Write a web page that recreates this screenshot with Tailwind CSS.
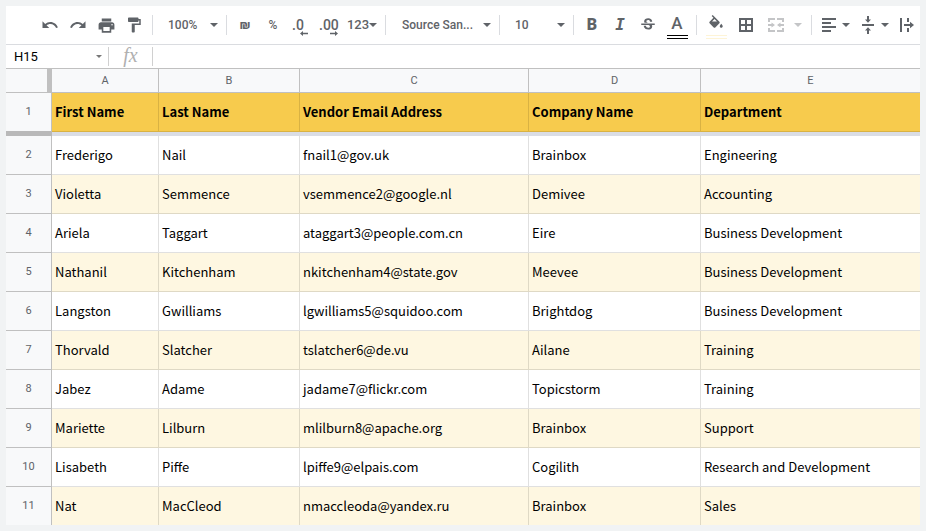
<!DOCTYPE html>
<html lang="en">
<head>
    <meta charset="UTF-8">
    <title>Vendors</title>
    <meta name="viewport" content="width=device-width, initial-scale=1.0">
    <script src="https://cdn.jsdelivr.net/npm/@tailwindcss/browser@4"></script>
</head>
<body class="bg-[#f1f3f4] p-1.5 font-['Roboto',sans-serif]">
    <div class="bg-white overflow-hidden">

        <!-- Toolbar -->
        <div class="flex items-center h-[39px] pl-[26px] border-b border-[#dadce0] text-[#5f6368] text-xs font-medium overflow-hidden *:shrink-0">
            <div class="flex px-1">
                <button class="w-7 h-7 grid place-items-center" aria-label="Undo">
                    <svg class="size-[18px]" viewBox="0 0 24 24" fill="currentColor"><path d="M12.5 8c-2.65 0-5.05.99-6.9 2.6L2 7v9h9l-3.62-3.62c1.39-1.16 3.16-1.88 5.12-1.88 3.54 0 6.55 2.31 7.6 5.5l2.37-.78C21.08 11.03 17.15 8 12.5 8z"/></svg>
                </button>
                <button class="w-7 h-7 grid place-items-center" aria-label="Redo">
                    <svg class="size-[18px]" viewBox="0 0 24 24" fill="currentColor"><path d="M18.4 10.6C16.55 8.99 14.15 8 11.5 8c-4.65 0-8.58 3.03-9.96 7.22L3.9 16c1.05-3.19 4.05-5.5 7.6-5.5 1.95 0 3.73.72 5.12 1.88L13 16h9V7l-3.6 3.6z"/></svg>
                </button>
                <button class="w-7 h-7 grid place-items-center" aria-label="Print">
                    <svg class="size-[19px]" viewBox="0 0 24 24" fill="currentColor"><path d="M19 8H5c-1.66 0-3 1.34-3 3v6h4v4h12v-4h4v-6c0-1.66-1.34-3-3-3zm-3 11H8v-5h8v5zm3-7c-.55 0-1-.45-1-1s.45-1 1-1 1 .45 1 1-.45 1-1 1zm-1-9H6v4h12V3z"/></svg>
                </button>
                <button class="w-7 h-7 grid place-items-center" aria-label="Paint format">
                    <svg class="size-[18px]" viewBox="0 0 24 24" fill="currentColor"><path d="M18 4V3c0-.55-.45-1-1-1H5c-.55 0-1 .45-1 1v4c0 .55.45 1 1 1h12c.55 0 1-.45 1-1V6h1v4H9v11c0 .55.45 1 1 1h2c.55 0 1-.45 1-1v-9h8V4h-3z"/></svg>
                </button>
            </div>

            <div class="w-px h-5 bg-[#dadce0]"></div>
            <div class="grid items-center w-[73px]">
                <select class="appearance-none col-start-1 row-start-1 w-full h-7 pl-[15px] outline-none" aria-label="Zoom">
                    <option>100%</option>
                </select>
                <svg class="col-start-1 row-start-1 justify-self-end mr-2 w-2 h-1 pointer-events-none" viewBox="0 0 8 4" fill="currentColor"><path d="M0 0h8L4 4z"/></svg>
            </div>

            <div class="w-px h-5 bg-[#dadce0]"></div>
            <div class="flex px-1">
                <button class="w-7 h-7 font-bold" aria-label="Format as currency">₪</button>
                <button class="w-7 h-7">%</button>
                <button class="w-7 h-7 grid content-center justify-start pt-1 pl-[5px]" aria-label="Decrease decimal places">
                    <span class="text-sm leading-3 text-left">.0</span>
                    <svg class="w-2 h-[5px] ml-2" viewBox="0 0 8 5" fill="currentColor"><path d="M0 2.500 3 0v1.700h5v1.600H3V5z"/></svg>
                </button>
                <button class="w-7 h-7 grid content-center justify-start pt-1 pl-1" aria-label="Increase decimal places">
                    <span class="text-sm leading-3 text-left">.00</span>
                    <svg class="w-2 h-[5px] ml-[11px]" viewBox="0 0 8 5" fill="currentColor"><path d="M8 2.500 5 0v1.700H0v1.600h5V5z"/></svg>
                </button>
                <button class="w-[38px] h-7 flex items-center justify-center" aria-label="More formats">
                    <span class="text-[13px]">123</span>
                    <svg class="w-2 h-1 shrink-0" viewBox="0 0 8 4" fill="currentColor"><path d="M0 0h8L4 4z"/></svg>
                </button>
            </div>

            <div class="w-px h-5 bg-[#dadce0]"></div>
            <div class="grid items-center w-[113px]">
                <select class="appearance-none col-start-1 row-start-1 w-full h-7 pl-4 outline-none" aria-label="Font">
                    <option>Source San...</option>
                </select>
                <svg class="col-start-1 row-start-1 justify-self-end mr-2 w-2 h-1 pointer-events-none" viewBox="0 0 8 4" fill="currentColor"><path d="M0 0h8L4 4z"/></svg>
            </div>

            <div class="w-px h-5 bg-[#dadce0]"></div>
            <div class="grid items-center w-[73px]">
                <select class="appearance-none col-start-1 row-start-1 w-full h-7 pl-[15px] outline-none" aria-label="Font size">
                    <option>10</option>
                </select>
                <svg class="col-start-1 row-start-1 justify-self-end mr-2 w-2 h-1 pointer-events-none" viewBox="0 0 8 4" fill="currentColor"><path d="M0 0h8L4 4z"/></svg>
            </div>

            <div class="w-px h-5 bg-[#dadce0]"></div>
            <div class="flex px-1">
                <button class="w-7 h-7 text-base font-black" aria-label="Bold">B</button>
                <button class="w-7 h-7 text-base font-bold italic font-['DejaVu_Sans_Mono',monospace]" aria-label="Italic">I</button>
                <button class="w-7 h-7 grid place-items-center" aria-label="Strikethrough">
                    <svg class="size-[18px]" viewBox="0 0 24 24" fill="currentColor"><path d="M6.850 7.080C6.850 4.370 9.450 3 12.240 3c1.640 0 3 .49 3.900 1.280.77.65 1.460 1.730 1.460 3.240h-3.010c0-.31-.05-.59-.15-.85-.29-.86-1.200-1.280-2.250-1.280-1.860 0-2.340 1.020-2.340 1.700 0 .48.25.88.74 1.210.38.25.77.48 1.410.7H7.390c-.21-.34-.54-.89-.54-1.920zM21 12v-2H3v2h9.620c1.150.45 1.960.75 1.960 1.970 0 1-.81 1.670-2.280 1.670-1.540 0-2.930-.54-2.930-2.510H6.400c0 .55.08 1.130.24 1.580.81 2.290 3.290 3.300 5.670 3.300 2.270 0 5.300-.89 5.300-4.050 0-.3-.01-1.160-.48-1.940H21V12z"/></svg>
                </button>
                <button class="w-[30px] h-7 flex flex-col items-center justify-end gap-0.5" aria-label="Text color">
                    <span class="text-[17px] leading-5">A</span>
                    <span class="w-[21px] h-1 border-y border-black"></span>
                </button>
            </div>

            <div class="w-px h-5 bg-[#dadce0]"></div>
            <div class="flex px-1">
                <button class="w-[30px] h-7 flex flex-col items-center justify-end gap-0.5" aria-label="Fill color">
                    <svg class="size-[18px]" viewBox="0 0 24 24" fill="currentColor"><path d="M16.560 8.940L7.620 0 6.210 1.410l2.380 2.380-5.150 5.150c-.59.59-.59 1.540 0 2.120l5.500 5.500c.29.29.68.44 1.060.44s.77-.15 1.060-.44l5.500-5.500c.59-.58.59-1.530 0-2.120zM6.700 8.500L10 5.200 13.300 8.500H6.700zM19 11.500s-2 2.170-2 3.500c0 1.100.9 2 2 2s2-.9 2-2c0-1.330-2-3.500-2-3.500z"/></svg>
                    <span class="w-[21px] h-1 border-y border-[#fef4d6]"></span>
                </button>
                <button class="w-[30px] h-7 grid place-items-center" aria-label="Borders">
                    <svg class="size-[14px]" viewBox="0 0 14 14" fill="none" stroke="currentColor" stroke-width="2"><path d="M1 1h12v12H1zM7 1v12M1 7h12"/></svg>
                </button>
                <button class="w-[46px] h-7 flex items-center gap-2.5 pl-[7px] text-[#c4c5c7]" aria-label="Merge cells" disabled>
                    <svg class="w-4 h-3.5" viewBox="0 0 16 14" fill="none" stroke="currentColor" stroke-width="2"><path d="M1 4V1h6M9 1h6v3M1 10v3h6M9 13h6v-3M0 7h4M16 7h-4"/><path d="M3.500 4.500v5L7 7zM12.500 4.500v5L9 7z" fill="currentColor" stroke="none"/></svg>
                    <svg class="w-2 h-1" viewBox="0 0 8 4" fill="currentColor"><path d="M0 0h8L4 4z"/></svg>
                </button>
            </div>

            <div class="w-px h-5 bg-[#dadce0]"></div>
            <div class="flex px-1">
                <button class="w-10 h-7 flex items-center gap-1.5 pl-1.5" aria-label="Horizontal align">
                    <svg class="w-3.5 h-3.5" viewBox="0 0 14 14" fill="none" stroke="currentColor" stroke-width="2"><path d="M0 1h14M0 5h9M0 9h14M0 13h9"/></svg>
                    <svg class="w-2 h-1" viewBox="0 0 8 4" fill="currentColor"><path d="M0 0h8L4 4z"/></svg>
                </button>
                <button class="w-[38px] h-7 flex items-center gap-[7px] pl-1.5" aria-label="Vertical align">
                    <svg class="w-3 h-[18px]" viewBox="0 0 12 18" fill="none" stroke="currentColor" stroke-width="2"><path d="M0 9h12M6 0v4M6 18v-4"/><path d="M3 3.500h6L6 6.700zM3 14.500h6L6 11.300z" fill="currentColor" stroke="none"/></svg>
                    <svg class="w-2 h-1" viewBox="0 0 8 4" fill="currentColor"><path d="M0 0h8L4 4z"/></svg>
                </button>
                <button class="w-7 h-7 flex items-center pl-1.5" aria-label="Text wrapping">
                    <svg class="w-3.5 h-3.5" viewBox="0 0 14 14" fill="none" stroke="currentColor" stroke-width="2"><path d="M1 0v14M8 0v4M8 10v4M4 7h7"/><path d="M10 3.800v6.400L14 7z" fill="currentColor" stroke="none"/></svg>
                </button>
            </div>
        </div>

        <!-- Name box and formula bar -->
        <div class="flex items-center h-6 border-b border-[#c0c0c0]">
            <div class="grid items-center w-[102px]">
                <input class="col-start-1 row-start-1 w-full pl-2 text-[13px] text-black outline-none" type="text" value="H15" aria-label="Name box">
                <svg class="col-start-1 row-start-1 justify-self-end mr-1.5 w-[6px] h-[3px] pointer-events-none text-[#777777]" viewBox="0 0 6 3" fill="currentColor"><path d="M0 0h6L3 3z"/></svg>
            </div>
            <div class="w-px h-[19px] bg-[#d0d0d0]"></div>
            <label for="formula" class="w-[43px] pb-1 text-center text-xl leading-5 italic text-[#b0b0b0] font-['Liberation_Serif',serif]">fx</label>
            <div class="w-px h-[19px] bg-[#d0d0d0]"></div>
            <input id="formula" class="flex-1 min-w-0 px-2 text-[13px] outline-none" type="text">
        </div>

        <!-- Sheet -->
        <table class="w-full table-fixed border-separate border-spacing-0 whitespace-nowrap">
            <colgroup>
                <col class="w-[46px]">
                <col class="w-[107px]">
                <col class="w-[141px]">
                <col class="w-[229px]">
                <col class="w-[172px]">
                <col>
            </colgroup>
            <thead>
                <tr class="h-6 bg-[#f8f9fa] text-[11px] leading-4 text-[#5f6368] *:p-0 *:font-normal *:border-b *:border-[#c0c0c0]">
                    <td class="border-r-[5px] border-r-[#b9b9b9]"></td>
                    <th class="border-r">A</th>
                    <th class="border-r">B</th>
                    <th class="border-r">C</th>
                    <th class="border-r">D</th>
                    <th>E</th>
                </tr>
                <tr class="h-[39px] bg-[#f7cb4d] text-[13px] leading-5 text-black text-left font-['Noto_Sans_CJK_SC',sans-serif]">
                    <th class="p-0 text-center text-[11px] leading-4 font-normal font-['Roboto',sans-serif] text-[#5f6368] bg-[#f8f9fa] border-r border-r-[#c0c0c0] border-b border-b-[#b9b9b9]">1</th>
                    <th class="p-0 pl-[3px] font-bold border-r border-b border-black/12">First Name</th>
                    <th class="p-0 pl-[3px] font-bold border-r border-b border-black/12">Last Name</th>
                    <th class="p-0 pl-[3px] font-bold border-r border-b border-black/12">Vendor Email Address</th>
                    <th class="p-0 pl-[3px] font-bold border-r border-b border-black/12">Company Name</th>
                    <th class="p-0 pl-[3px] font-bold border-b border-black/12">Department</th>
                </tr>
                <!-- frozen row handle -->
                <tr class="h-1">
                    <td class="p-0 bg-[#b9b9b9]"></td>
                    <td class="p-0 bg-[#dadde5]" colspan="5"></td>
                </tr>
            </thead>
            <tbody id="rows"></tbody>
        </table>
    </div>

    <script>
        const vendors = [
            ["Frederigo", "Nail", "fnail1@gov.uk", "Brainbox", "Engineering"],
            ["Violetta", "Semmence", "vsemmence2@google.nl", "Demivee", "Accounting"],
            ["Ariela", "Taggart", "ataggart3@people.com.cn", "Eire", "Business Development"],
            ["Nathanil", "Kitchenham", "nkitchenham4@state.gov", "Meevee", "Business Development"],
            ["Langston", "Gwilliams", "lgwilliams5@squidoo.com", "Brightdog", "Business Development"],
            ["Thorvald", "Slatcher", "tslatcher6@de.vu", "Ailane", "Training"],
            ["Jabez", "Adame", "jadame7@flickr.com", "Topicstorm", "Training"],
            ["Mariette", "Lilburn", "mlilburn8@apache.org", "Brainbox", "Support"],
            ["Lisabeth", "Piffe", "lpiffe9@elpais.com", "Cogilith", "Research and Development"],
            ["Nat", "MacCleod", "nmaccleoda@yandex.ru", "Brainbox", "Sales"]
        ];

        document.getElementById("rows").innerHTML = vendors.map((vendor, i) => `
            <tr class="h-[39px] last:h-[38px] last:*:border-b-0 even:bg-[#fef7e1] text-[13px] leading-5 text-black font-['Noto_Sans_CJK_SC',sans-serif]">
                <th class="p-0 text-[11px] leading-4 font-normal font-['Roboto',sans-serif] text-[#5f6368] bg-[#f8f9fa] border-r border-b border-[#c0c0c0]">${i + 2}</th>
                ${vendor.map(text => `<td class="p-0 pl-[3px] border-r border-b border-black/12 last:border-r-0">${text}</td>`).join("")}
            </tr>
        `).join("");
    </script>
</body>
</html>
